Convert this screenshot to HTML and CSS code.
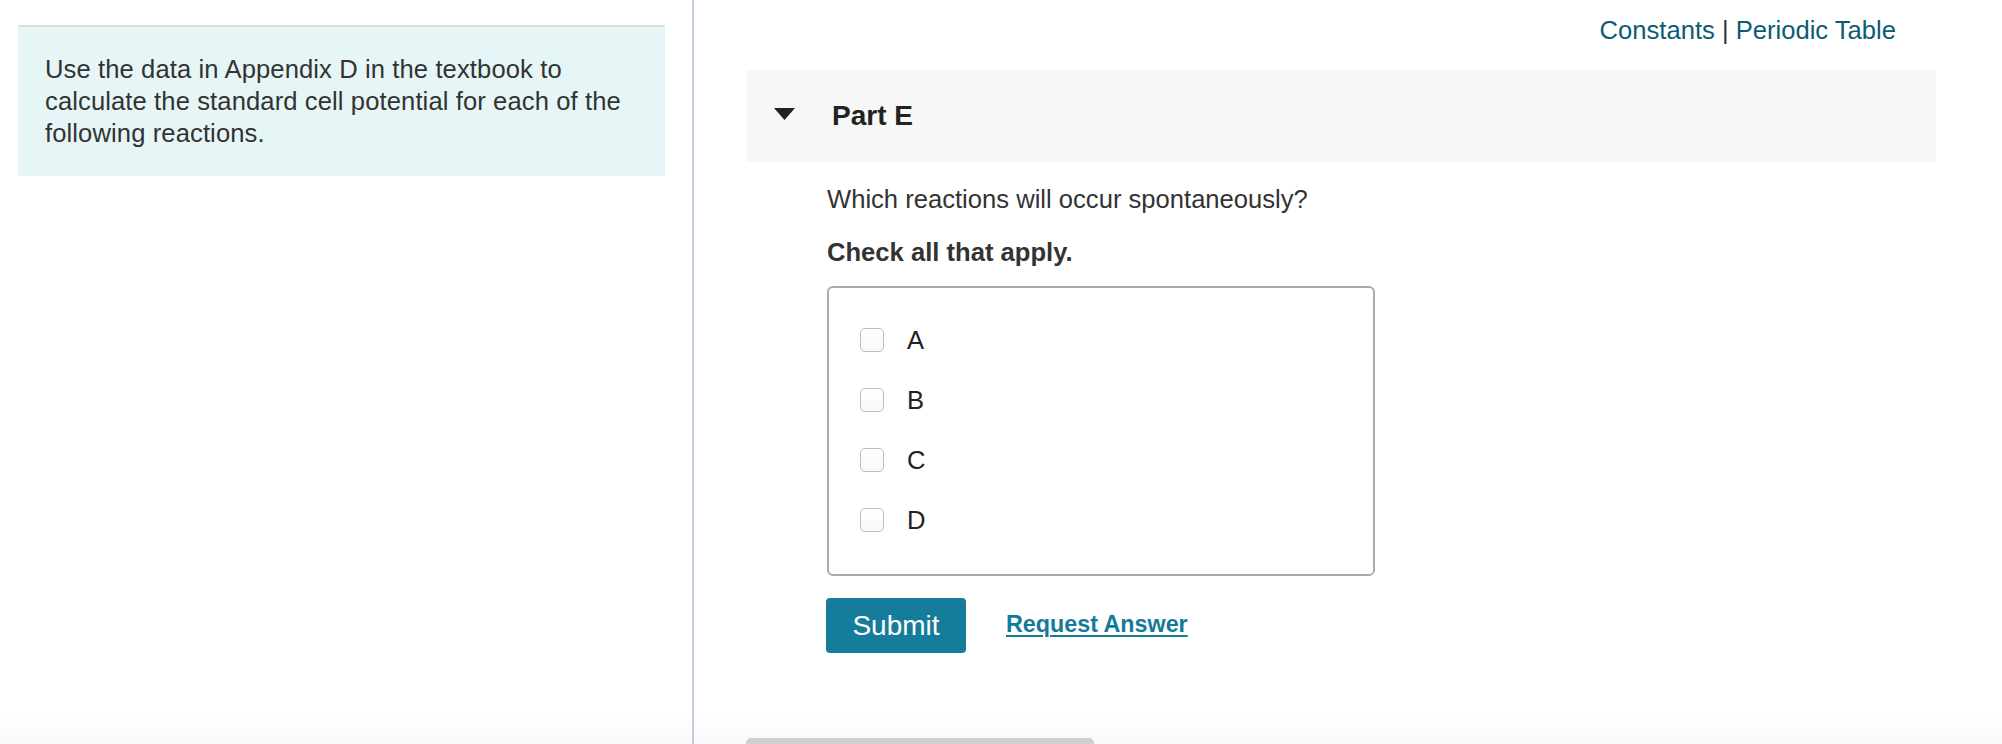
FILE: index.html
```html
<!DOCTYPE html>
<html lang="en">
<head>
<meta charset="utf-8">
<title>Part E</title>
<link rel="stylesheet" href="styles.css">
</head>
<body>
<div class="page">
  <aside class="intro-col">
    <div class="intro-box">
      <p>Use the data in Appendix D in the textbook to calculate the standard cell potential for each of the following reactions.</p>
    </div>
  </aside>
  <main class="main-col">
    <div class="toplinks">
      <a class="toplink" href="#">Constants</a><span class="pipe"> | </span><a class="toplink" href="#">Periodic Table</a>
    </div>
    <section class="part">
      <header class="part-head">
        <svg class="caret" viewBox="0 0 21 12" width="21" height="12" aria-hidden="true"><polygon points="0,0 21,0 10.5,12" fill="#222"/></svg>
        <h2 class="part-title">Part E</h2>
      </header>
      <div class="part-body">
        <p class="question">Which reactions will occur spontaneously?</p>
        <p class="instruction">Check all that apply.</p>
        <div class="choices">
          <label class="choice"><input type="checkbox" class="cb"><span class="choice-label">A</span></label>
          <label class="choice"><input type="checkbox" class="cb"><span class="choice-label">B</span></label>
          <label class="choice"><input type="checkbox" class="cb"><span class="choice-label">C</span></label>
          <label class="choice"><input type="checkbox" class="cb"><span class="choice-label">D</span></label>
        </div>
        <div class="actions">
          <button class="submit" type="button">Submit</button>
          <a class="request" href="#">Request Answer</a>
        </div>
      </div>
    </section>
    <div class="next-part"></div>
  </main>
</div>
<div class="bottom-fade"></div>
</body>
</html>
```
FILE: styles.css
```css
html, body {
  margin: 0;
  padding: 0;
  height: 100%;
  overflow: hidden;
  background: #fff;
}
body {
  font-family: "Liberation Sans", Arial, Helvetica, sans-serif;
  font-size: 25.6px;
  line-height: 32px;
  color: #333;
}
.page {
  display: grid;
  grid-template-columns: 692px 1fr;
  min-height: 744px;
}
.intro-col {
  padding-top: 25px;
  padding-left: 18px;
  padding-right: 27px;
}
.intro-box {
  border-top: 2px solid #dcdcdc;
  background: #e6f6f7;
  padding: 26px 20px 27px 27px;
}
.intro-box p {
  margin: 0;
  letter-spacing: 0.1px;
}
.main-col {
  border-left: 2px solid #c3d2e3;
  display: flex;
  flex-direction: column;
}
.toplinks {
  align-self: flex-end;
  margin-right: 106px;
  padding-top: 14px;
}
.toplink {
  color: #0b5c73;
  text-decoration: none;
}
.pipe {
  color: #333;
}
.part {
  margin: 24px 66px 0 52px;
}
.part-head {
  background: #f7f7f7;
  height: 92px;
  display: flex;
  align-items: center;
  padding-left: 28px;
}
.caret {
  display: block;
  margin-top: -4px;
}
.part-title {
  margin: 0 0 0 37px;
  font-size: 28px;
  font-weight: bold;
  line-height: 32px;
  color: #222;
}
.part-body {
  padding-left: 81px;
}
.question {
  margin: 21px 0 0 0;
}
.instruction {
  margin: 21px 0 0 0;
  font-weight: bold;
}
.choices {
  margin-top: 18px;
  width: 548px;
  box-sizing: border-box;
  border: 2px solid #ababab;
  border-radius: 6px;
  padding: 40px 0 42px 31px;
  display: flex;
  flex-direction: column;
  gap: 36px;
}
.choice {
  display: flex;
  align-items: center;
  height: 24px;
}
.cb {
  appearance: none;
  -webkit-appearance: none;
  margin: 0;
  width: 24px;
  height: 24px;
  box-sizing: border-box;
  border: 1.5px solid #bdbdbd;
  border-radius: 5px;
  background: linear-gradient(#ffffff, #f8f8f8);
}
.choice-label {
  margin-left: 23px;
  color: #222;
}
.actions {
  margin-top: 22px;
  margin-left: -1px;
  display: flex;
  align-items: center;
}
.submit {
  width: 140px;
  height: 55px;
  border: none;
  border-radius: 4px;
  background: #167c9c;
  color: #fff;
  font-family: inherit;
  font-size: 28px;
  padding: 0;
}
.request {
  margin-left: 40px;
  color: #147a9a;
  font-weight: bold;
  font-size: 23.3px;
  text-decoration: underline;
  text-underline-offset: 3px;
  text-decoration-thickness: 2px;
  position: relative;
  top: -2px;
}
.next-part {
  margin: 85px 0 0 52px;
  width: 348px;
  height: 20px;
  background: #d6d6d6;
  border-radius: 5px 5px 0 0;
}
.bottom-fade {
  position: fixed;
  left: 0;
  right: 0;
  bottom: 0;
  height: 30px;
  background: linear-gradient(rgba(0,0,0,0), rgba(0,0,0,0.025));
  pointer-events: none;
}
```
